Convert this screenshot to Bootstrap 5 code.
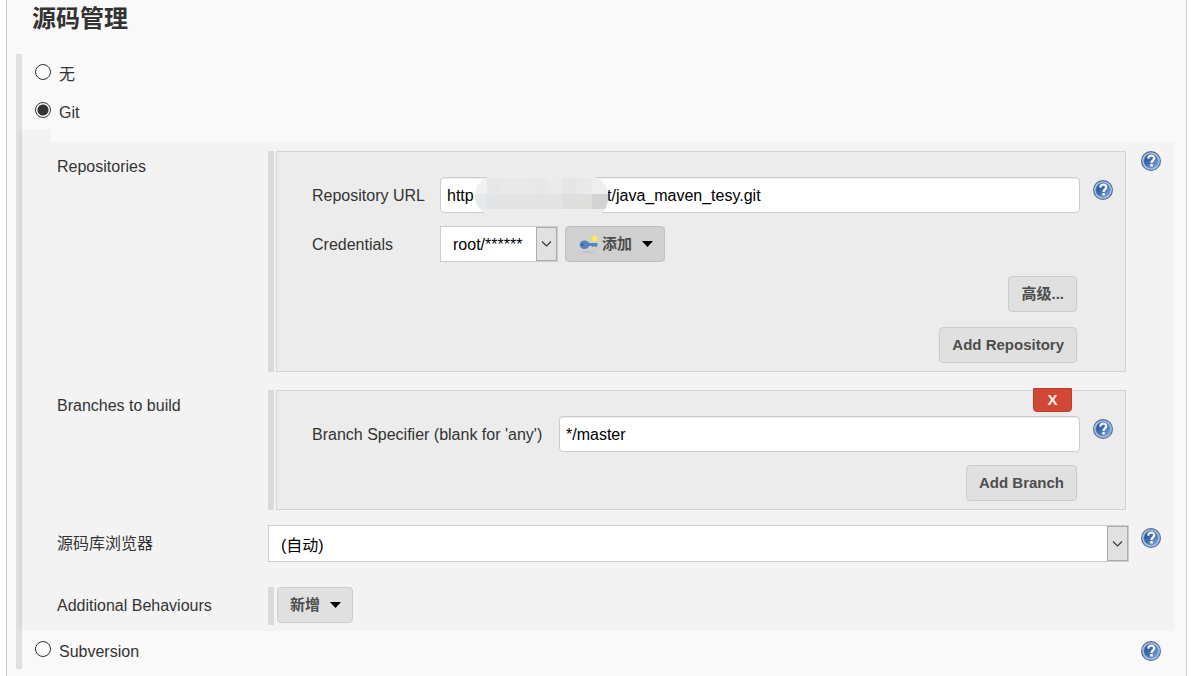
<!DOCTYPE html>
<html lang="zh-CN">
<head>
<meta charset="utf-8">
<meta name="viewport" content="width=device-width, initial-scale=1">
<title>源码管理</title>
<link href="https://cdn.jsdelivr.net/npm/bootstrap@5.3.0/dist/css/bootstrap.min.css" rel="stylesheet">
<style>
  body { background: #fff; color: #333; font: 16px/24px "Liberation Sans", "Noto Sans CJK SC", sans-serif; }
  .config { min-height: 100vh; margin: 0 4px 0 6px; border: solid #ccc; border-width: 0 1px; background: #f9f9f9; }
  .config h1 { height: 54px; margin: 0; padding: 0 0 0 25px; font-size: 24px; line-height: 38px; font-weight: 700; }
  .scm { margin: 0 12px 0 9px; border-left: 6px solid #e0e0e0; }
  .choice { height: 38px; padding-left: 13px; }
  .choice label { margin: 9px 0 0 8px; }
  .choice input { appearance: none; width: 16px; height: 16px; margin: 10px 0 0; border: 1px solid #333; border-radius: 50%; background: #fff; }
  .choice input:checked { background: radial-gradient(circle, #333 5px, #fff 6px); }
  .git-tab, .git-form { margin-left: -3px; border-left: 3px solid #d9d9d9; background: #f3f3f3; }
  .git-tab { width: 32px; height: 13px; margin-top: -1px; }
  .git-form { padding: 9px 0 6px; }
  .name-col { flex: 0 0 246px; padding: 4px 0 0 35px; }
  .name-mid { padding-top: 7px; }
  .field { min-width: 0; }
  .help { display: block; width: 20px; height: 20px; padding: 0; border: 0; background: none; flex: none; }
  .help svg { display: block; }
  .help-col { flex: 0 0 45px; padding-left: 12px; }
  .help-in { padding: 3px 0 0 13px; }
  .low { padding-top: 3px; }
  .low-svn { padding-top: 10px; }
  .drag { border-left: 6px solid #dadada; padding-left: 2px; margin-right: 3px; }
  .panel { border: 1px solid #d3d3d3; background: #ececec; padding: 25px 12px 8px 35px; }
  .row-gap { margin-top: 13px; }
  .acts { padding-right: 36px; gap: 15px; }
  .acts-top { margin-top: 14px; }
  .entry { height: 36px; padding: 1px 6px 0; color: #000; border: 1px solid #ccc; border-radius: 4px; font-size: 16px; line-height: 24px; box-shadow: inset 0 1px 1px rgba(0,0,0,.08); }
  .label-url, .label-spec { padding-top: 7px; }
  .label-url { flex: 0 0 128px; }
  .label-spec { flex: 0 0 247px; }
  .pick select { display: block; appearance: none; width: 100%; height: 36px; padding: 2px 24px 0 12px; border: 1px solid #ccc; border-radius: 0; background: #fff; color: #000; }
  .pick svg { right: 1px; top: 1px; bottom: 1px; pointer-events: none; background: #e1e1e1; border: 1px solid #adadad; width: 21px; height: calc(100% - 2px); }
  .pick-cred { width: 118px; margin-right: 7px; }
  .pick-wide select { height: 37px; padding-top: 5px; }
  .jbtn { height: 36px; padding: 0 12px; border: 1px solid #ccc; border-radius: 4px; background: #e0e0e0; color: #4d4d4d; font-size: 15px; line-height: 24px; font-weight: 700; }
  .jbtn.pressed { background: #d0d0d0; border-color: #c0c0c0; }
  .jbtn.menu { padding-right: 11px; }
  .caret { margin-left: 10px; }
  .remove { top: -3px; right: 53px; width: 39px; height: 24px; padding: 0; border: 1px solid #c13c2c; border-radius: 0 0 4px 4px; background: #d14836; color: #eee; font-size: 15px; line-height: 20px; font-weight: 700; }
  .smudge { left: 34px; top: -1px; }
  .row-branch { margin-top: 18px; }
  .row-browser { margin-top: 15px; }
  .row-extra { margin-top: 25px; }
  .drag-btn { height: 38px; padding-left: 3px; }
</style>
</head>
<body>
<svg width="0" height="0" class="position-absolute" aria-hidden="true">
  <defs>
    <linearGradient id="ball" x1="0" y1="0" x2="1" y2="1"><stop offset="0" stop-color="#1b478b"/><stop offset=".5" stop-color="#416fb0"/><stop offset="1" stop-color="#8fb0da"/></linearGradient>
    <symbol id="q" viewBox="0 0 20 20">
      <circle cx="10" cy="10" r="9.4" fill="#b9c9e1" stroke="#4a6ea6" stroke-width="1.2"/>
      <circle cx="10" cy="10" r="7.2" fill="url(#ball)" stroke="#6b8dbf" stroke-width=".7"/>
      <path d="M7.200 7.700C7.400 5.500 8.700 4.700 10.200 4.700c1.900 0 3 1 3 2.500 0 2.100-2.700 2.400-2.700 4.700" fill="none" stroke="#f4f7fb" stroke-width="2.300"/>
      <rect x="9.200" y="13" width="2.600" height="2.500" fill="#f4f7fb"/>
    </symbol>
  </defs>
</svg>
<main class="config">
  <h1>源码管理</h1>
  <form class="scm">
    <div class="choice d-flex"><input type="radio" name="scm" id="none"><label for="none">无</label></div>
    <div class="choice d-flex"><input type="radio" name="scm" id="git" checked><label for="git">Git</label></div>
    <div class="git-tab"></div>
    <div class="git-form d-flex flex-column">
      <div class="d-flex">
        <div class="name-col">Repositories</div>
        <div class="field flex-grow-1"><div class="drag"><div class="panel">
          <div class="d-flex">
            <label class="label-url" for="url">Repository URL</label>
            <div class="position-relative flex-grow-1">
              <input class="entry w-100 d-block" id="url" type="text" value="http&nbsp;&nbsp;&nbsp;&nbsp;&nbsp;&nbsp;&nbsp;&nbsp;&nbsp;&nbsp;&nbsp;&nbsp;&nbsp;&nbsp;&nbsp;&nbsp;&nbsp;&nbsp;&nbsp;&nbsp;&nbsp;&nbsp;&nbsp;&nbsp;&nbsp;&nbsp;&nbsp;&nbsp;ot/java_maven_tesy.git">
              <svg class="smudge position-absolute" width="135" height="38" viewBox="0 0 135 38" aria-hidden="true">
                <clipPath id="pill"><path d="M18 0H116C128 2 134 10 134 20C134 28 132 33 127 38H12C5 33 1 28 1 20C1 9 7 3 18 0Z"/></clipPath>
                <g clip-path="url(#pill)" shape-rendering="crispEdges">
                  <rect width="135" height="38" fill="#ededed"/>
                  <rect y="2" width="13" height="16" fill="#f1f1f1"/><rect x="13" y="2" width="15" height="16" fill="#e7e7e6"/><rect x="28" y="2" width="30" height="16" fill="#e9e9e9"/><rect x="58" y="2" width="15" height="16" fill="#e8e8e8"/><rect x="73" y="2" width="15" height="16" fill="#ebebeb"/><rect x="88" y="2" width="15" height="16" fill="#e6e6e5"/><rect x="103" y="2" width="15" height="16" fill="#e9e9e9"/><rect x="118" y="2" width="17" height="16" fill="#eee"/>
                  <rect y="18" width="13" height="15" fill="#e4e9ed"/><rect x="13" y="18" width="15" height="15" fill="#e2e4e5"/><rect x="28" y="18" width="30" height="15" fill="#e4e4e5"/><rect x="58" y="18" width="15" height="15" fill="#e3e3e3"/><rect x="73" y="18" width="15" height="15" fill="#e4e4e4"/><rect x="88" y="18" width="30" height="15" fill="#dededc"/><rect x="118" y="18" width="17" height="15" fill="#d3d3d3"/>
                </g>
              </svg>
            </div>
            <div class="help-in"><button class="help" type="button" aria-label="Help"><svg width="20" height="20"><use href="#q"/></svg></button></div>
          </div>
          <div class="d-flex row-gap">
            <label class="label-url" for="cred">Credentials</label>
            <div class="pick pick-cred position-relative"><select id="cred"><option>root/******</option></select>
              <svg class="position-absolute" viewBox="0 0 19 32" aria-hidden="true"><path d="M5 13.500l4.500 4.500L14 13.500" fill="none" stroke="#333" stroke-width="1.100"/></svg></div>
            <button class="jbtn menu pressed d-flex align-items-center" type="button">
              <svg class="me-1" width="20" height="20" viewBox="0 0 20 20" aria-hidden="true"><ellipse cx="10" cy="18" rx="6" ry="1" fill="#c2c2c2"/><circle cx="16.500" cy="4.500" r="3.300" fill="#eee56c"/><circle cx="16.500" cy="4.500" r="1.700" fill="#fff25c"/><path d="M8 9H19.500V11L18.500 13H17V12H15.500V13H14V12H8Z" fill="#5585c2"/><ellipse cx="6.500" cy="10.800" rx="4.900" ry="4.200" fill="#5583c0"/><ellipse cx="4.500" cy="10.800" rx="1.200" ry="1.500" fill="#38639e"/></svg>添加
              <svg class="caret" width="11" height="6" viewBox="0 0 11 6" aria-hidden="true"><path d="M0 0H11L5.500 6Z" fill="#000"/></svg>
            </button>
          </div>
          <div class="acts acts-top d-flex flex-column align-items-end">
            <button class="jbtn" type="button">高级...</button>
            <button class="jbtn" type="button">Add Repository</button>
          </div>
        </div></div></div>
        <div class="help-col"><button class="help" type="button" aria-label="Help"><svg width="20" height="20"><use href="#q"/></svg></button></div>
      </div>

      <div class="d-flex row-branch">
        <div class="name-col">Branches to build</div>
        <div class="field flex-grow-1"><div class="drag"><div class="panel position-relative">
          <button class="remove position-absolute" type="button">X</button>
          <div class="d-flex">
            <label class="label-spec" for="spec">Branch Specifier (blank for 'any')</label>
            <input class="entry flex-grow-1" id="spec" type="text" value="*/master">
            <div class="help-in"><button class="help" type="button" aria-label="Help"><svg width="20" height="20"><use href="#q"/></svg></button></div>
          </div>
          <div class="acts row-gap d-flex flex-column align-items-end">
            <button class="jbtn" type="button">Add Branch</button>
          </div>
        </div></div></div>
        <div class="help-col"></div>
      </div>

      <div class="d-flex row-browser">
        <label class="name-col name-mid" for="browser">源码库浏览器</label>
        <div class="field flex-grow-1 pick pick-wide position-relative"><select id="browser"><option>(自动)</option></select>
          <svg class="position-absolute" viewBox="0 0 19 33" aria-hidden="true"><path d="M5 14.500l4.500 4.500L14 14.500" fill="none" stroke="#333" stroke-width="1.100"/></svg></div>
        <div class="help-col low"><button class="help" type="button" aria-label="Help"><svg width="20" height="20"><use href="#q"/></svg></button></div>
      </div>

      <div class="d-flex row-extra">
        <div class="name-col name-mid">Additional Behaviours</div>
        <div class="drag drag-btn"><button class="jbtn menu d-flex align-items-center" type="button">新增
          <svg class="caret" width="11" height="6" viewBox="0 0 11 6" aria-hidden="true"><path d="M0 0H11L5.500 6Z" fill="#000"/></svg></button></div>
      </div>
    </div>
    <div class="choice d-flex"><input type="radio" name="scm" id="svn"><label for="svn">Subversion</label>
      <div class="help-col low-svn ms-auto"><button class="help" type="button" aria-label="Help"><svg width="20" height="20"><use href="#q"/></svg></button></div></div>
  </form>
</main>
<script src="https://cdn.jsdelivr.net/npm/bootstrap@5.3.0/dist/js/bootstrap.bundle.min.js"></script>
</body>
</html>
